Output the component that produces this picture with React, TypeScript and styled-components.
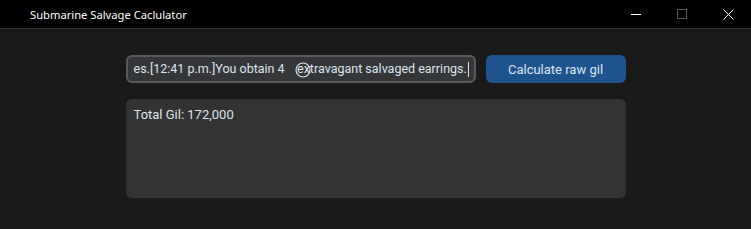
import React from "react";
import styled, { createGlobalStyle } from "styled-components";

const Global = createGlobalStyle`
  html, body { margin: 0; padding: 0; background: #1a1a1a; }
  body { width: 751px; height: 229px; overflow: hidden; }
`;

const Window = styled.div`
  width: 751px;
  height: 229px;
  display: flex;
  flex-direction: column;
  background: #1a1a1a;
`;

const TitleBar = styled.div`
  height: 29px;
  flex: none;
  background: #000000;
  display: flex;
  align-items: center;
  border-bottom: 1px solid #2b2b2b;
  box-sizing: border-box;
`;

const Title = styled.div`
  flex: 1;
  padding-left: 30px;
  color: #ffffff;
  font-family: "Noto Sans", "Open Sans", sans-serif;
  font-size: 11.2px;
  line-height: 29px;
`;

const Controls = styled.div`
  display: flex;
  height: 100%;
`;

const ControlButton = styled.div`
  width: 46px;
  height: 100%;
  display: flex;
  align-items: center;
  justify-content: center;
`;

const Content = styled.div`
  flex: 1;
  display: flex;
  flex-direction: column;
  align-items: center;
  padding-top: 26px;
  gap: 16px;
`;

const Row = styled.div`
  display: flex;
  gap: 10px;
  width: 500px;
`;

const Entry = styled.div`
  position: relative;
  width: 350px;
  height: 28px;
  box-sizing: border-box;
  border: 2px solid #565b5e;
  border-radius: 6px;
  background: #343638;
  color: #dce4ee;
  font-family: Roboto, "Liberation Sans", sans-serif;
  font-size: 12.5px;
  line-height: 24px;
  padding-left: 6px;
  white-space: pre;
  overflow: hidden;
  display: flex;
  align-items: center;
`;

const Caret = styled.span`
  display: inline-block;
  width: 1px;
  height: 15px;
  background: #dce4ee;
  margin-left: 1px;
`;

const Pointer = styled.svg`
  position: absolute;
  left: 167px;
  top: 5px;
`;

const Button = styled.div`
  width: 140px;
  height: 28px;
  border-radius: 6px;
  background: #1f538d;
  color: #dce4ee;
  font-family: Roboto, "Liberation Sans", sans-serif;
  font-size: 13px;
  display: flex;
  align-items: center;
  justify-content: center;
`;

const Output = styled.div`
  width: 500px;
  height: 99px;
  box-sizing: border-box;
  border-radius: 6px;
  background: #333333;
  color: #dce4ee;
  font-family: Roboto, "Liberation Sans", sans-serif;
  font-size: 13px;
  line-height: 16px;
  padding: 8px 8px;
`;

export default function App() {
  return (
    <>
      <Global />
      <Window>
        <TitleBar>
          <Title>Submarine Salvage Caclulator</Title>
          <Controls>
            <ControlButton>
              <svg width="10" height="10" viewBox="0 0 10 10">
                <line x1="0" y1="5.5" x2="10" y2="5.5" stroke="#ffffff" strokeWidth="1" />
              </svg>
            </ControlButton>
            <ControlButton>
              <svg width="10" height="10" viewBox="0 0 10 10">
                <rect x="0.5" y="0.5" width="9" height="9" fill="none" stroke="#555555" strokeWidth="1" />
              </svg>
            </ControlButton>
            <ControlButton>
              <svg width="11" height="11" viewBox="0 0 11 11">
                <path d="M0.5 0.5 L10.5 10.5 M10.5 0.5 L0.5 10.5" stroke="#ffffff" strokeWidth="1" />
              </svg>
            </ControlButton>
          </Controls>
        </TitleBar>
        <Content>
          <Row>
            <Entry>
              {"es.[12:41 p.m.]You obtain 4    extravagant salvaged earrings."}
              <Caret />
              <Pointer width="16" height="16" viewBox="0 0 16 16">
                <circle cx="8" cy="8" r="7" fill="none" stroke="#dce4ee" strokeWidth="1.2" />
              </Pointer>
            </Entry>
            <Button>Calculate raw gil</Button>
          </Row>
          <Output>Total Gil: 172,000</Output>
        </Content>
      </Window>
    </>
  );
}
